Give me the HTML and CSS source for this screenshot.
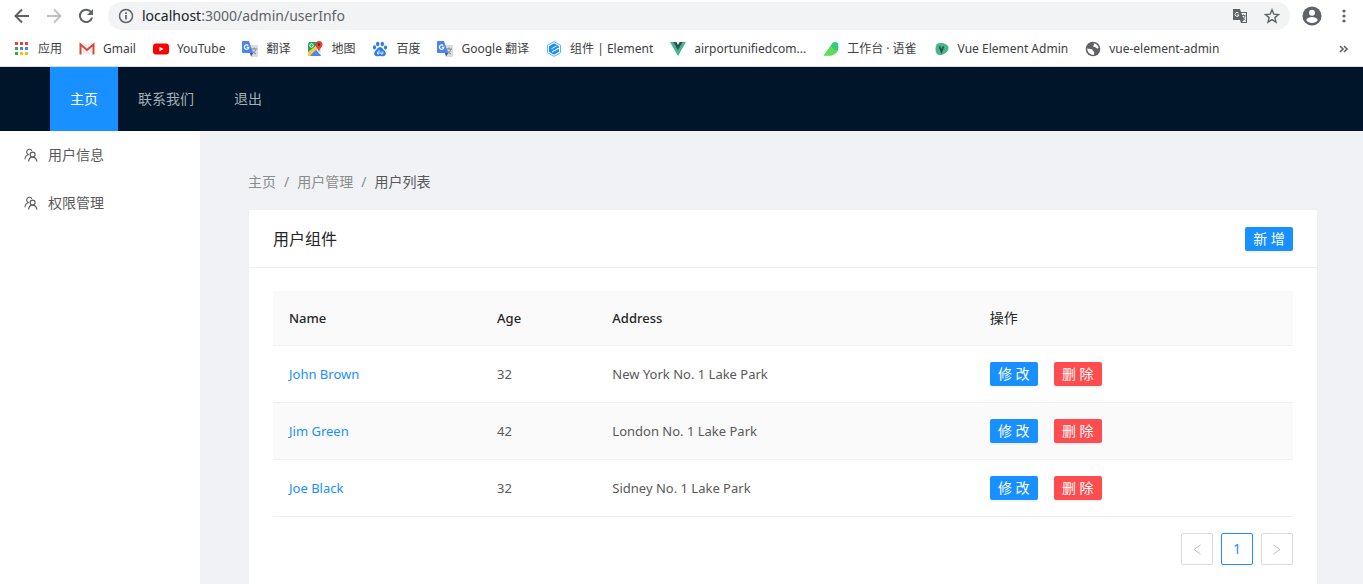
FILE: index.html
```html
<!DOCTYPE html>
<html lang="zh-CN">
<head>
<meta charset="utf-8">
<title>用户列表</title>
<link rel="stylesheet" href="styles.css">
</head>
<body>
<svg class="sprite" aria-hidden="true">
  <symbol id="translate" viewBox="0 0 16 16">
    <path d="M7 4h8a1 1 0 0 1 1 1v10a1 1 0 0 1-1 1H9z" fill="#dcdcdc"/>
    <path d="M9 8h6M12 6.500v1.500M14 8c-.5 2-2 4-4 5M10.500 9.500c1 1.800 2 2.800 3.500 3.500" stroke="#7b8794" fill="none"/>
    <path d="M1 0h6l4 12H1a1 1 0 0 1-1-1V1a1 1 0 0 1 1-1z" fill="#4a86f0"/>
    <path d="M8 12h3l-2 3.500z" fill="#2850b8"/>
    <path d="M6.200 4.600A2.200 2.200 0 1 0 6.800 6.400H4.800" stroke="#fff" stroke-width="1.200" fill="none"/>
  </symbol>
  <symbol id="team" viewBox="0 0 14 14">
    <g fill="none" stroke="currentColor" stroke-width="1.100">
      <circle cx="8.600" cy="6.600" r="2.500"/>
      <path d="M4.600 13.600c.2-2.800 1.700-4.500 4-4.500s3.900 1.700 4.300 4.500M7.800 2.800A2.700 2.700 0 1 0 4.200 6.400M1 11.200C1.100 8.800 2.400 7 4.900 6.500"/>
    </g>
  </symbol>
</svg>

<div class="browser">
  <div class="toolbar">
    <button class="nav-btn" aria-label="后退"><svg viewBox="0 0 16 16"><path d="M15 8H2M8 1.500 1.500 8 8 14.500" fill="none" stroke="#5f6368" stroke-width="2"/></svg></button>
    <button class="nav-btn" aria-label="前进" disabled><svg viewBox="0 0 16 16"><path d="M1 8h13M8 1.500 14.500 8 8 14.500" fill="none" stroke="#bdc1c6" stroke-width="2"/></svg></button>
    <button class="nav-btn" aria-label="刷新"><svg viewBox="0 0 16 16"><path d="M13.400 4.600A6.200 6.200 0 1 0 14.100 9.500" fill="none" stroke="#5f6368" stroke-width="2"/><path d="M15 1v6H9z" fill="#5f6368"/></svg></button>
    <div class="omnibox">
      <svg class="icon" viewBox="0 0 16 16"><circle cx="8" cy="8" r="6.500" fill="none" stroke="#5f6368" stroke-width="1.500"/><path d="M8 7v4.500M8 4.200v1.700" stroke="#5f6368" stroke-width="1.700"/></svg>
      <span class="url"><span class="host">localhost</span>:3000/admin/userInfo</span>
      <button class="omni-btn" aria-label="翻译此页"><svg class="icon" viewBox="0 0 16 16"><path d="M1 1h7l1 3H15v11H9l-1-3H1z" fill="#5f6368"/><path d="M9.400 5H14v9h-4l2-2z" fill="#f1f3f4"/><path d="M6.500 5A2 2 0 1 0 7 7H5" stroke="#f1f3f4" fill="none"/><path d="M9.500 7.500h4M11.500 6.500v1M13 8c-.5 2-1.500 3-3 4M10.500 9l3 3.500" stroke="#5f6368" fill="none" stroke-width=".9"/></svg></button>
      <button class="omni-btn" aria-label="收藏"><svg class="icon" viewBox="0 0 16 16"><path d="m8 1.800 1.800 4.300 4.700.4-3.600 3.100 1.100 4.600L8 11.700l-4 2.500 1.100-4.600-3.600-3.100 4.700-.4z" fill="none" stroke="#5f6368" stroke-width="1.400"/></svg></button>
    </div>
    <button class="profile" aria-label="用户"><svg viewBox="0 0 20 20"><circle cx="10" cy="10" r="9.500" fill="#5f6368"/><circle cx="10" cy="6.800" r="3" fill="#fff"/><path d="M4.200 14c1-2.300 3.300-3 5.800-3s4.800.7 5.800 3a7 7 0 0 1-11.600 0z" fill="#fff"/></svg></button>
    <button class="more" aria-label="更多"><svg viewBox="0 0 4 16"><g fill="#5f6368"><circle cx="2" cy="3" r="1.600"/><circle cx="2" cy="8" r="1.600"/><circle cx="2" cy="13" r="1.600"/></g></svg></button>
  </div>
  <nav class="bookmarks" aria-label="书签">
    <a href="#"><svg class="icon" viewBox="0 0 16 16"><path d="M1 1h3v3H1zM6 1h3v3H6zM11 1h3v3h-3z" fill="#ea4335"/><path d="M1 6h3v3H1zM1 11h3v3H1z" fill="#34a853"/><path d="M6 6h3v3H6zM11 6h3v3h-3z" fill="#4285f4"/><path d="M6 11h3v3H6zM11 11h3v3h-3z" fill="#fbbc05"/></svg>应用</a>
    <a href="#"><svg class="icon" viewBox="0 0 16 16"><path d="M1 2.500h14v11H1z" fill="#f0eeee"/><path d="M1.500 13.500v-10L8 9l6.500-5.500v10" fill="none" stroke="#d54b3d" stroke-width="2"/></svg>Gmail</a>
    <a href="#"><svg class="icon" viewBox="0 0 16 16"><rect y="2.500" width="16" height="11" rx="3" fill="#f00"/><path d="m6.400 5.700 4.200 2.300-4.200 2.300z" fill="#fff"/></svg>YouTube</a>
    <a href="#"><svg class="icon"><use href="#translate"/></svg>翻译</a>
    <a href="#"><svg class="icon" viewBox="0 0 16 16"><path d="M2 2h12v12H2z" fill="#e8e8e8"/><path d="M1 2.500 2.500 1H10l1 6-10 7z" fill="#24a35a"/><path d="m1 14 7-6 6 7H2z" fill="#4a87ee"/><path d="m1 11 10-8 2 2L3 15H1z" fill="#f6ca45"/><path d="m4 14 5-5 5 6H4z" fill="#4a87ee"/><circle cx="4.500" cy="4.500" r="1.700" fill="none" stroke="#fff"/><path d="M12 0a3.500 3.500 0 0 1 3.500 3.500C15.500 6 12.800 7 12 11 11.200 7 8.500 6 8.500 3.500A3.500 3.500 0 0 1 12 0z" fill="#dc4437"/><circle cx="12" cy="3.500" r="1.200" fill="#7b231b"/></svg>地图</a>
    <a href="#"><svg class="icon" viewBox="0 0 16 16"><g fill="#2f7de8"><ellipse cx="5.700" cy="3" rx="1.700" ry="2.300"/><ellipse cx="10.300" cy="3" rx="1.700" ry="2.300"/><ellipse cx="2.500" cy="6.400" rx="1.600" ry="2.100"/><ellipse cx="13.500" cy="6.600" rx="1.600" ry="2.100"/><path d="M8 6c2.300 0 2.900 2.300 4.400 3.600 2.600 2.400 1.500 5.700-1.200 5.700-1.200 0-2-.4-3.200-.4s-2 .4-3.200.4c-2.500 0-3.800-3.300-1.200-5.700C5.100 8.300 5.700 6 8 6z"/></g><path d="M7 9v4H5.500v-2H7M9 10.500V13h1.800v-2.500" fill="none" stroke="#fff" stroke-width=".8"/></svg>百度</a>
    <a href="#"><svg class="icon"><use href="#translate"/></svg>Google 翻译</a>
    <a href="#"><svg class="icon" viewBox="0 0 16 16"><path d="m8 .6 6.500 3.700v7.400L8 15.400l-6.500-3.700V4.300z" fill="#fff" stroke="#58b4ff"/><path d="m8 2.300 5 2.900v1.200L6 10.200v1.300l7-3.800v3.100l-5 2.900-5-2.900V5.200z" fill="#1890ff"/><path d="m5.500 7.800 5-2.800" stroke="#fff"/></svg>组件 | Element</a>
    <a href="#"><svg class="icon" viewBox="0 0 16 16"><path d="M0 1h4l4 7 4-7h4L8 15z" fill="#41b883"/><path d="M3.400 1h3L8 4l1.600-3h3L8 9z" fill="#35495e"/></svg>airportunifiedcom...</a>
    <a href="#"><svg class="icon" viewBox="0 0 16 16"><path d="M8.500 3.500C9.500.8 13 .3 14.500 2l1 .4-.6 1.200C17 9 13 14.500 7 14.500H.8z" fill="#31cc79"/><path d="M8 4.500c2 4 4.500 5 6.500 5-1.500 3-4 5-7.500 5H.8z" fill="#67db59"/></svg>工作台 · 语雀</a>
    <a href="#"><svg class="icon" viewBox="0 0 16 16"><path d="M3 3C6 .8 14 2.200 14.500 6.500S9 14.500 5 14 .5 5.500 3 3z" fill="#45ba83"/><path d="m5.500 5.500 2 5 2-5" fill="none" stroke="#35495e" stroke-width="1.800"/></svg>Vue Element Admin</a>
    <a href="#"><svg class="icon" viewBox="0 0 16 16"><circle cx="8" cy="8" r="7.300" fill="#5f6368"/><path d="M8.500 2.300c2.600.2 4.600 2 5.200 4.700-1 .8-2 .4-2.700-.3-.8-.8-2.600-.2-2.700-1.500 0-1.200 1.500-1.200.2-2.900zM2.200 7.500l4.300.8c1.700.4 1 2.100 2.600 2.500v2.900c-3.800.5-6.800-2.300-6.900-6.200z" fill="#fff"/></svg>vue-element-admin</a>
    <button class="overflow" aria-label="更多书签"><svg viewBox="0 0 10 8"><path d="m1 1 3 3-3 3M5 1l3 3-3 3" fill="none" stroke="#5f6368" stroke-width="1.600"/></svg></button>
  </nav>
</div>

<header class="header">
  <nav class="menu">
    <a class="menu-item active" href="#">主页</a>
    <a class="menu-item" href="#">联系我们</a>
    <a class="menu-item" href="#">退出</a>
  </nav>
</header>

<div class="layout">
  <aside class="sider">
    <a class="side-item" href="#"><svg><use href="#team"/></svg>用户信息</a>
    <a class="side-item" href="#"><svg><use href="#team"/></svg>权限管理</a>
  </aside>
  <main class="content">
    <nav class="breadcrumb" aria-label="面包屑">
      <a href="#">主页</a><span>/</span><a href="#">用户管理</a><span>/</span><span class="current">用户列表</span>
    </nav>
    <section class="card">
      <div class="card-head">
        <h1>用户组件</h1>
        <button class="btn primary">新 增</button>
      </div>
      <div class="card-body">
        <table class="table">
          <colgroup><col class="col-name"><col class="col-age"><col class="col-address"><col></colgroup>
          <thead><tr><th>Name</th><th>Age</th><th>Address</th><th class="th-actions">操作</th></tr></thead>
          <tbody>
            <tr><td><a href="#">John Brown</a></td><td>32</td><td>New York No. 1 Lake Park</td><td><div class="actions"><button class="btn primary">修 改</button><button class="btn danger">删 除</button></div></td></tr>
            <tr><td><a href="#">Jim Green</a></td><td>42</td><td>London No. 1 Lake Park</td><td><div class="actions"><button class="btn primary">修 改</button><button class="btn danger">删 除</button></div></td></tr>
            <tr><td><a href="#">Joe Black</a></td><td>32</td><td>Sidney No. 1 Lake Park</td><td><div class="actions"><button class="btn primary">修 改</button><button class="btn danger">删 除</button></div></td></tr>
          </tbody>
        </table>
        <nav class="pagination" aria-label="分页">
          <button class="page" aria-label="上一页" disabled><svg viewBox="0 0 12 12"><path d="M9.500 2 3 6.500 9.500 11" fill="none" stroke="currentColor"/></svg></button>
          <button class="page current">1</button>
          <button class="page" aria-label="下一页" disabled><svg viewBox="0 0 12 12"><path d="M2.500 2 9 6.500 2.500 11" fill="none" stroke="currentColor"/></svg></button>
        </nav>
      </div>
    </section>
  </main>
</div>
</body>
</html>
```
FILE: styles.css
```css
* { box-sizing: border-box; }

body {
  display: flex;
  flex-direction: column;
  min-height: 100vh;
  margin: 0;
  background: #f0f2f5;
  color: #595959;
  font: 14px/22px "Noto Sans", "Noto Sans CJK SC", sans-serif;
}

a { color: inherit; text-decoration: none; }
button { padding: 0; border: 0; background: none; font: inherit; cursor: pointer; }
button:disabled { cursor: default; }
svg { display: block; flex: none; }
.sprite { display: none; }
.icon { width: 16px; height: 16px; }

/* Browser bar */
.browser { background: #fff; border-bottom: 1px solid #dadce0; color: #3c4043; }
.toolbar { display: flex; align-items: center; height: 32px; padding: 0 17px 0 14px; }
.nav-btn { margin-right: 16px; }
.nav-btn svg { width: 16px; height: 16px; }
.omnibox {
  display: flex;
  flex: 1;
  align-items: center;
  height: 28px;
  margin-left: -2px;
  padding: 0 10px;
  border-radius: 14px;
  background: #f1f3f4;
}
.url { flex: 1; margin-left: 8px; color: #5f6368; }
.host { color: #202124; }
.omni-btn { margin-left: 16px; }
.profile { margin-left: 12px; }
.profile svg { width: 20px; height: 20px; }
.more { margin-left: 20px; }
.more svg { width: 4px; height: 16px; }
.bookmarks {
  display: flex;
  align-items: center;
  gap: 17px;
  height: 34px;
  padding: 0 14px;
  font-size: 12px;
  white-space: nowrap;
}
.bookmarks a { display: flex; align-items: center; gap: 8px; }
.overflow { margin-left: auto; }
.overflow svg { width: 10px; height: 8px; }

/* Top navigation */
.header { padding-left: 50px; background: #001529; }
.menu { display: flex; line-height: 64px; }
.menu-item { padding: 0 20px; color: #a6adb4; }
.menu-item.active { background: #1890ff; color: #fff; }

/* Page layout */
.layout { display: flex; flex: 1; }
.sider { width: 200px; padding-top: 4px; background: #fff; }
.side-item {
  display: flex;
  align-items: center;
  gap: 10px;
  height: 40px;
  margin-bottom: 8px;
  padding-left: 24px;
}
.side-item svg { width: 14px; height: 14px; }
.content { display: flex; flex: 1; flex-direction: column; padding: 40px 45px 0 48px; }

.breadcrumb { display: flex; margin-bottom: 16px; color: #8c8c8c; }
.breadcrumb span { margin: 0 8px; }
.breadcrumb .current { margin: 0; color: #595959; }

.card { flex: 1; border: 1px solid #f0f0f0; border-bottom: 0; border-radius: 2px; background: #fff; }
.card-head {
  display: flex;
  align-items: center;
  justify-content: space-between;
  height: 58px;
  padding: 0 24px;
  border-bottom: 1px solid #f0f0f0;
}
.card-head h1 { margin: 0; color: #262626; font-size: 16px; font-weight: 400; }
.card-body { padding: 23px 24px 18px; }

.btn {
  height: 24px;
  padding: 0 7px;
  min-width: 48px;
  border-radius: 2px;
  color: #fff;
  line-height: 24px;
  white-space: nowrap;
  box-shadow: 0 2px 0 rgba(0, 0, 0, 0.04);
}
.btn.primary { background: #1890ff; }
.btn.danger { background: #ff4d4f; }
.actions { display: flex; gap: 16px; }

.table { width: 100%; border-collapse: separate; border-spacing: 0; table-layout: fixed; font-size: 13px; }
.col-name { width: 20.4%; }
.col-age { width: 11.3%; }
.col-address { width: 37%; }
.table th, .table td { padding: 16px; border-bottom: 1px solid #f0f0f0; text-align: left; }
.table th { background: #fafafa; color: #262626; font-weight: 500; }
.table .th-actions { font-size: 14px; font-weight: 400; }
.table td a { color: #1890ff; }
.table tbody tr:nth-child(even) { background: #fafafa; }
.table .btn { font-size: 14px; }

.pagination { display: flex; justify-content: flex-end; gap: 8px; margin-top: 16px; }
.page {
  display: grid;
  place-items: center;
  width: 32px;
  height: 32px;
  border: 1px solid #d9d9d9;
  border-radius: 2px;
  color: #bfbfbf;
}
.page.current { border-color: #1890ff; color: #1890ff; }
.page svg { width: 12px; height: 12px; }
```
